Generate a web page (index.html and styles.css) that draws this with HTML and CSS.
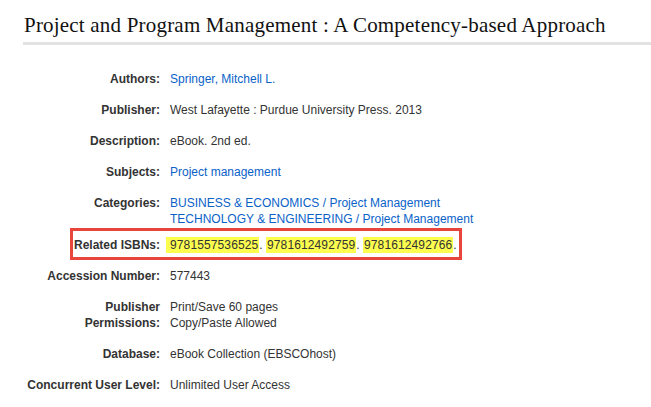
FILE: index.html
```html
<!DOCTYPE html>
<html lang="en">
<head>
<meta charset="utf-8">
<title>Project and Program Management : A Competency-based Approach</title>
<link rel="stylesheet" href="styles.css">
</head>
<body>
<div class="page">
  <h1 class="title">Project and Program Management : A Competency-based Approach</h1>
  <div class="record">
    <div class="row">
      <div class="label">Authors:</div>
      <div class="value"><a class="link" href="#">Springer, Mitchell L.</a></div>
    </div>
    <div class="row">
      <div class="label">Publisher:</div>
      <div class="value">West Lafayette : Purdue University Press. 2013</div>
    </div>
    <div class="row">
      <div class="label">Description:</div>
      <div class="value">eBook. 2nd ed.</div>
    </div>
    <div class="row">
      <div class="label">Subjects:</div>
      <div class="value"><a class="link" href="#">Project management</a></div>
    </div>
    <div class="row">
      <div class="label">Categories:</div>
      <div class="value">
        <div><a class="link" href="#">BUSINESS &amp; ECONOMICS</a> <span class="link">/</span> <a class="link" href="#">Project Management</a></div>
        <div><a class="link" href="#">TECHNOLOGY &amp; ENGINEERING</a> <span class="link">/</span> <a class="link" href="#">Project Management</a></div>
      </div>
    </div>
    <div class="row row--flagged">
      <div class="label">Related ISBNs:</div>
      <div class="value"><span class="mark mark--first">9781557536525</span>. <span class="mark">9781612492759</span>. <span class="mark">9781612492766</span>.</div>
    </div>
    <div class="row">
      <div class="label">Accession Number:</div>
      <div class="value">577443</div>
    </div>
    <div class="row">
      <div class="label">Publisher<br>Permissions:</div>
      <div class="value">Print/Save 60 pages<br>Copy/Paste Allowed</div>
    </div>
    <div class="row">
      <div class="label">Database:</div>
      <div class="value">eBook Collection (EBSCOhost)</div>
    </div>
    <div class="row">
      <div class="label">Concurrent User Level:</div>
      <div class="value">Unlimited User Access</div>
    </div>
  </div>
</div>
</body>
</html>
```
FILE: styles.css
```css
html, body {
  margin: 0;
  padding: 0;
  background: #ffffff;
}

body {
  font-family: "Liberation Sans", Arial, sans-serif;
  font-size: 12px;
  line-height: 16px;
  color: #333333;
}

.page {
  padding-left: 23px;
}

.title {
  margin: 0;
  padding: 13px 0 5px 1px;
  font-family: "Liberation Serif", "Times New Roman", serif;
  font-size: 21px;
  font-weight: normal;
  line-height: 24px;
  letter-spacing: 0.2px;
  color: #111111;
  border-bottom: 3px solid #e3e3e3;
  white-space: nowrap;
}

.record {
  padding-top: 26px;
}

.row {
  display: grid;
  grid-template-columns: 137px 1fr;
  column-gap: 10px;
  margin-top: 15px;
}

.row:first-child {
  margin-top: 0;
}

.label {
  text-align: right;
  font-weight: bold;
  color: #333333;
}

.value {
  color: #333333;
}

.link {
  color: #0a62c9;
  text-decoration: none;
}

.row--flagged {
  position: relative;
  margin-top: 10px;
}

.row--flagged::before {
  content: "";
  position: absolute;
  left: 47px;
  top: -9px;
  width: 392px;
  height: 32px;
  box-sizing: border-box;
  border: 3px solid #e8453c;
  pointer-events: none;
}

.mark {
  background: #fdfd4f;
  padding: 1px 1px;
  letter-spacing: 0.12px;
}

.mark--first {
  padding-left: 4px;
  margin-left: -4px;
}
```
